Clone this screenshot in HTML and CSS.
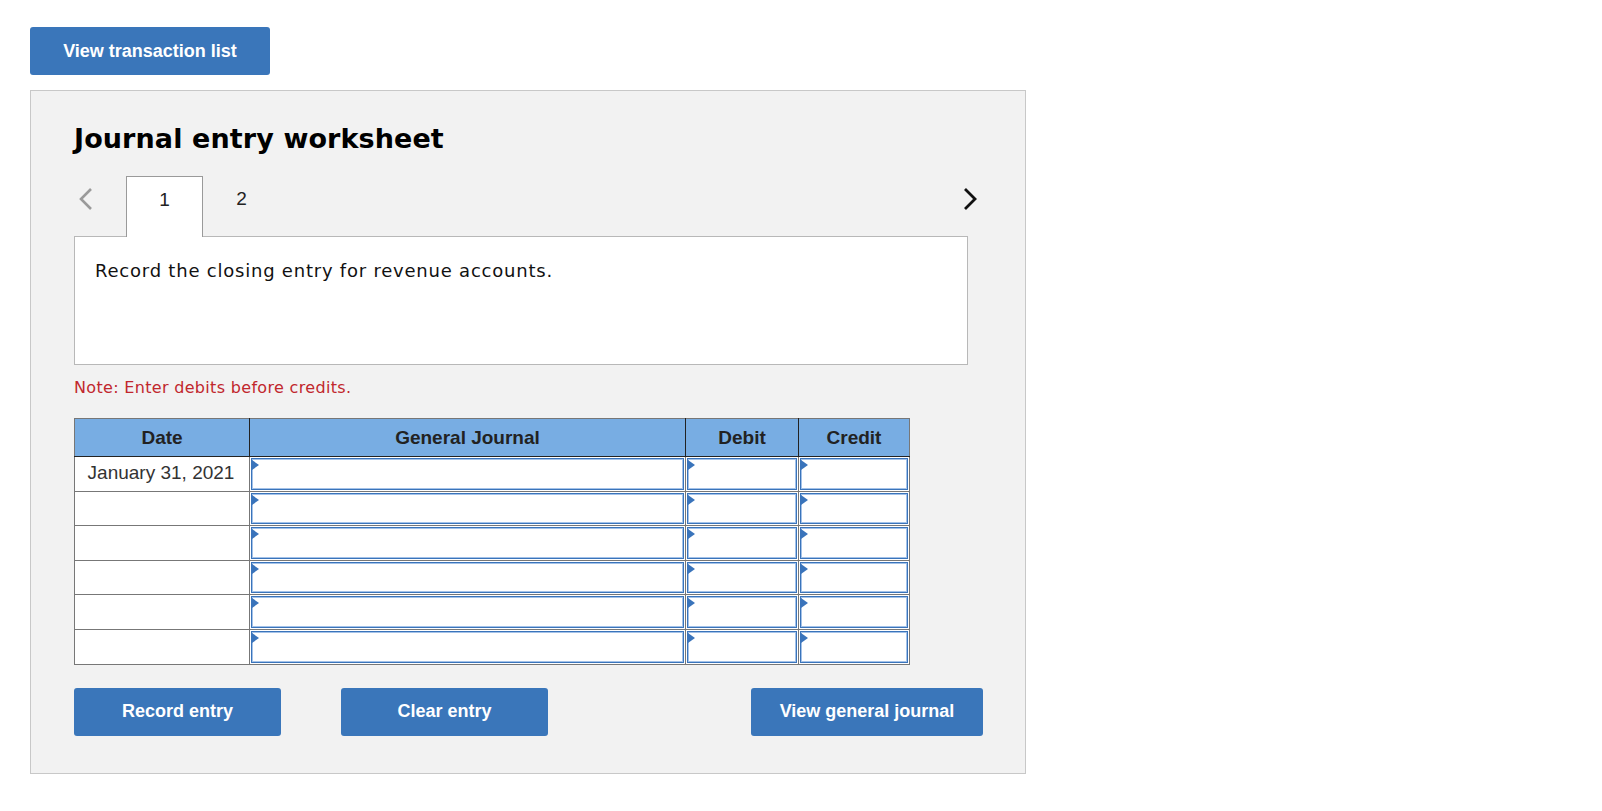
FILE: index.html
```html
<!DOCTYPE html>
<html>
<head>
<meta charset="utf-8">
<title>Journal entry worksheet</title>
<link rel="stylesheet" href="styles.css">
</head>
<body>
<button class="btn btn-top">View transaction list</button>
<div class="panel">
  <h1 class="title">Journal entry worksheet</h1>
  <div class="tabs">
    <div class="nav nav-prev">
      <svg width="16" height="24" viewBox="0 0 16 24"><polyline points="13,2 3,12 13,22" fill="none" stroke="#9a9a9a" stroke-width="2.6"/></svg>
    </div>
    <div class="tab tab-active">1</div>
    <div class="tab">2</div>
    <div class="nav nav-next">
      <svg width="16" height="24" viewBox="0 0 16 24"><polyline points="3,2 13,12 3,22" fill="none" stroke="#111" stroke-width="2.8"/></svg>
    </div>
  </div>
  <div class="desc">Record the closing entry for revenue accounts.</div>
  <p class="note">Note: Enter debits before credits.</p>
  <table class="journal">
    <colgroup>
      <col class="c-date"><col class="c-gj"><col class="c-dr"><col class="c-cr">
    </colgroup>
    <thead>
      <tr><th>Date</th><th>General Journal</th><th>Debit</th><th>Credit</th></tr>
    </thead>
    <tbody>
      <tr><td class="date">January 31, 2021</td><td><div class="inp"></div></td><td><div class="inp"></div></td><td><div class="inp"></div></td></tr>
      <tr><td class="date"></td><td><div class="inp"></div></td><td><div class="inp"></div></td><td><div class="inp"></div></td></tr>
      <tr><td class="date"></td><td><div class="inp"></div></td><td><div class="inp"></div></td><td><div class="inp"></div></td></tr>
      <tr><td class="date"></td><td><div class="inp"></div></td><td><div class="inp"></div></td><td><div class="inp"></div></td></tr>
      <tr><td class="date"></td><td><div class="inp"></div></td><td><div class="inp"></div></td><td><div class="inp"></div></td></tr>
      <tr><td class="date"></td><td><div class="inp"></div></td><td><div class="inp"></div></td><td><div class="inp"></div></td></tr>
    </tbody>
  </table>
  <div class="actions">
    <button class="btn btn-record">Record entry</button>
    <button class="btn btn-clear">Clear entry</button>
    <button class="btn btn-view">View general journal</button>
  </div>
</div>
</body>
</html>
```
FILE: styles.css
```css
html, body {
  margin: 0;
  padding: 0;
  background: #fff;
}
body {
  padding: 27px 0 0 30px;
  font-family: "DejaVu Sans", Verdana, sans-serif;
  color: #111;
}
.btn {
  display: block;
  height: 48px;
  border: none;
  border-radius: 3px;
  background: #3a76ba;
  color: #fff;
  font-family: "Liberation Sans", Arial, sans-serif;
  font-weight: bold;
  font-size: 18px;
  padding: 0;
  cursor: pointer;
}
.btn-top {
  width: 240px;
}
.panel {
  box-sizing: border-box;
  width: 996px;
  margin-top: 15px;
  background: #f2f2f2;
  border: 1px solid #c8c8c8;
  padding: 32px 0 37px 43px;
}
.title {
  margin: 0;
  font-family: "DejaVu Sans", Verdana, sans-serif;
  font-weight: bold;
  font-size: 27px;
  letter-spacing: 0.1px;
  line-height: 32px;
  color: #000;
}
.tabs {
  display: flex;
  height: 60px;
  margin-top: 21px;
  width: 906px;
  position: relative;
}
.nav {
  width: 52px;
  display: flex;
  align-items: flex-start;
  padding-top: 11px;
  box-sizing: border-box;
}
.nav-prev {
  padding-left: 4px;
}
.nav-next {
  margin-left: auto;
  width: auto;
  padding-right: 2px;
}
.tab {
  box-sizing: border-box;
  width: 77px;
  height: 61px;
  text-align: center;
  font-family: "Liberation Sans", Arial, sans-serif;
  font-size: 19px;
  line-height: 20px;
  padding-top: 13px;
  color: #222;
}
.tab-active {
  background: #fff;
  border: 1px solid #9a9a9a;
  border-bottom: none;
  position: relative;
  z-index: 1;
}
.desc {
  box-sizing: border-box;
  width: 894px;
  height: 129px;
  background: #fff;
  border: 1px solid #b8b8b8;
  padding: 22px 20px;
  font-size: 18px;
  letter-spacing: 0.78px;
  line-height: 24px;
  color: #111;
}
.note {
  margin: 13px 0 0;
  font-size: 16px;
  letter-spacing: 0.32px;
  line-height: 20px;
  color: #c1272d;
}
.journal {
  margin-top: 20px;
  border-collapse: collapse;
  table-layout: fixed;
  width: 835px;
  font-family: "Liberation Sans", Arial, sans-serif;
}
.c-date { width: 175px; }
.c-gj { width: 436px; }
.c-dr { width: 113px; }
.c-cr { width: 111px; }
.journal th {
  height: 37px;
  background: #78ade3;
  border: 1px solid #222;
  border-top-color: #777;
  font-size: 19px;
  font-weight: bold;
  color: #222;
  padding: 0;
}
.journal th:first-child { border-left-color: #777; }
.journal th:last-child { border-right-color: #777; }
.journal td {
  height: 31.6px;
  border: 1px solid #777;
  padding: 1px;
  background: #fff;
}
.journal td.date {
  text-align: center;
  font-size: 19px;
  color: #333;
  padding: 0 2px 2px 0;
}
.inp {
  box-sizing: border-box;
  height: 31.6px;
  border: 1px solid #3a74bb;
  box-shadow: inset 0 0 0 1px #a4c2e8;
  background: #fff;
  position: relative;
}
.inp::before {
  content: "";
  position: absolute;
  left: 0;
  top: 1px;
  border-left: 7px solid #3a74bb;
  border-top: 5px solid transparent;
  border-bottom: 5px solid transparent;
}
.actions {
  display: flex;
  margin-top: 23px;
}
.btn-record { width: 207px; }
.btn-clear { width: 207px; margin-left: 60px; }
.btn-view { width: 232px; margin-left: 203px; }
```
